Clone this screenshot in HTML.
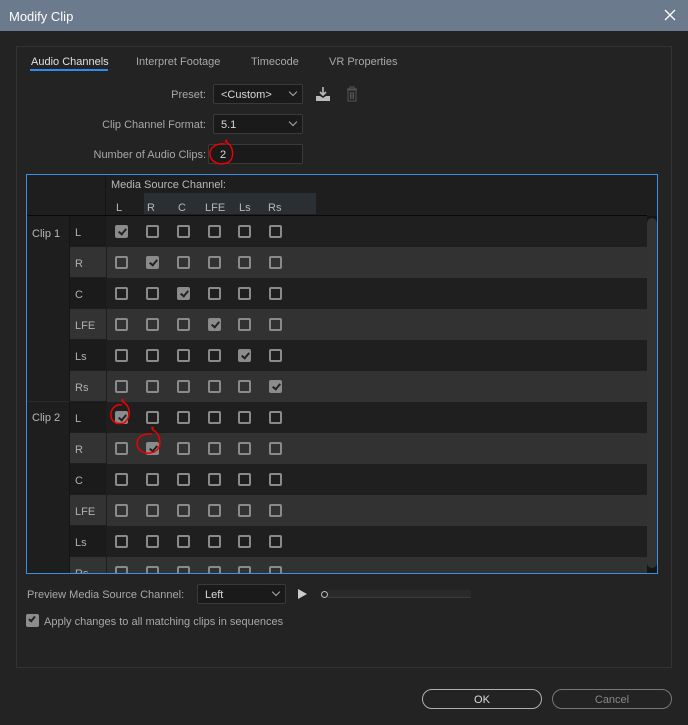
<!DOCTYPE html>
<html><head><style>
*{margin:0;padding:0;box-sizing:border-box}
body{width:688px;height:725px;background:#232323;font-family:"Liberation Sans",sans-serif;font-size:11px;color:#b8b8b8;position:relative;overflow:hidden}
.a{position:absolute}
.title{left:0;top:0;width:688px;height:31px;background:#6b7a8c;color:#fff;font-size:13px;padding:9px 0 0 9px}
.panel{left:16px;top:46px;width:656px;height:622px;border:1px solid #333}
.tab{top:56px;font-size:11px;color:#a8a8a8}
.lbl{text-align:right;color:#a8a8a8;width:200px}
.dd{background:#1a1a1a;border:1px solid #3a3a3a;border-radius:2px;color:#d8d8d8;padding:4px 0 0 7px;height:20px}
.dd i{position:absolute;right:6px;top:4px;width:6px;height:6px;border-right:1px solid #aaa;border-bottom:1px solid #aaa;transform:rotate(45deg)}
.tbl{left:26px;top:174px;width:632px;height:400px;border:1px solid #3b8fe8;background:#1e1e1e;overflow:hidden}
.row{position:absolute;left:80px;width:540px;height:31px}
.d{background:#1f1f1f}.l{background:#323232}
.rl{position:absolute;left:43px;width:36px;height:30px;padding:11px 0 0 5px;color:#b0b0b0}
.rl.d{background:#1b1b1b}.rl.l{background:#333}
.cb{position:absolute;top:9px;width:13px;height:13px;border:2px solid #8a8a8a;border-radius:2px}
.cb.c{background:#8c8c8c}
.cb.c:after{content:"";position:absolute;left:3px;top:0px;width:3px;height:6px;border-right:2px solid #222;border-bottom:2px solid #222;transform:rotate(40deg)}
.btn{top:689px;width:120px;height:20px;border:1px solid #b0b0b0;border-radius:10px;text-align:center;padding-top:4px;font-size:11px}
</style></head><body>
<div class="a title">Modify Clip</div>
<svg class="a" style="left:664px;top:9px" width="12" height="12"><path d="M1 1L11 11M11 1L1 11" stroke="#fff" stroke-width="1.3"/></svg>
<div class="a panel"></div>
<div class="a tab" style="left:31px;color:#e0e0e0">Audio Channels</div>
<div class="a" style="left:30px;top:69px;width:78px;height:2px;background:#2d8ceb"></div>
<div class="a tab" style="left:136px">Interpret Footage</div>
<div class="a tab" style="left:251px">Timecode</div>
<div class="a tab" style="left:329px">VR Properties</div>
<div class="a lbl" style="left:6px;top:89px">Preset:</div>
<div class="a dd" style="left:213px;top:84px;width:90px">&lt;Custom&gt;<i></i></div>
<svg class="a" style="left:315px;top:86px" width="16" height="16"><path d="M8 1V9M5 6L8 9L11 6" stroke="#bbb" stroke-width="1.6" fill="none"/><path d="M1 10H5L8 12L11 10H15V15H1Z" fill="#bbb"/></svg>
<svg class="a" style="left:346px;top:86px" width="12" height="16"><path d="M1 3H11M4 3V1H8V3M2 4H10V15H2ZM4.5 6V13M6 6V13M7.5 6V13" stroke="#555" fill="none"/></svg>
<div class="a lbl" style="left:6px;top:119px">Clip Channel Format:</div>
<div class="a dd" style="left:213px;top:114px;width:90px">5.1<i></i></div>
<div class="a lbl" style="left:6px;top:149px">Number of Audio Clips:</div>
<div class="a dd" style="left:208px;top:144px;width:95px;padding-left:11px">2</div>
<svg class="a" style="left:203px;top:137px" width="36" height="30"><path d="M22 5C26 3 21 2 24 6C30 8 32 20 26 25C18 29 8 26 7 18C6 10 14 6 22 7" stroke="#e00" stroke-width="1.5" fill="none"/></svg>
<div class="a tbl">
<div class="a" style="left:84px;top:4px;color:#b8b8b8">Media Source Channel:</div>
<div class="a" style="left:117px;top:18px;width:172px;height:21px;background:#2a2f33"></div>
<div class="a" style="left:78px;top:0;width:1px;height:40px;background:#151515"></div>
<div class="a" style="left:89px;top:27px">L</div><div class="a" style="left:120px;top:27px">R</div><div class="a" style="left:151px;top:27px">C</div><div class="a" style="left:178px;top:27px">LFE</div><div class="a" style="left:212px;top:27px">Ls</div><div class="a" style="left:241px;top:27px">Rs</div>
<div class="a" style="left:0;top:40px;width:620px;height:1px;background:#080808"></div>
<div class="a" style="left:0;top:41px;width:43px;height:186px;border-right:1px solid #151515;border-bottom:1px solid #2a2a2a"></div>
<div class="a" style="left:5px;top:53px">Clip 1</div>
<div class="a" style="left:0;top:227px;width:43px;height:180px;border-right:1px solid #151515"></div>
<div class="a" style="left:5px;top:237px">Clip 2</div>

<div class="rl d" style="top:41px">L</div><div class="row d" style="top:41px"><div class="cb c" style="left:8px"></div><div class="cb" style="left:39px"></div><div class="cb" style="left:70px"></div><div class="cb" style="left:101px"></div><div class="cb" style="left:131px"></div><div class="cb" style="left:162px"></div></div>
<div class="rl l" style="top:72px">R</div><div class="row l" style="top:72px"><div class="cb" style="left:8px"></div><div class="cb c" style="left:39px"></div><div class="cb" style="left:70px"></div><div class="cb" style="left:101px"></div><div class="cb" style="left:131px"></div><div class="cb" style="left:162px"></div></div>
<div class="rl d" style="top:103px">C</div><div class="row d" style="top:103px"><div class="cb" style="left:8px"></div><div class="cb" style="left:39px"></div><div class="cb c" style="left:70px"></div><div class="cb" style="left:101px"></div><div class="cb" style="left:131px"></div><div class="cb" style="left:162px"></div></div>
<div class="rl l" style="top:134px">LFE</div><div class="row l" style="top:134px"><div class="cb" style="left:8px"></div><div class="cb" style="left:39px"></div><div class="cb" style="left:70px"></div><div class="cb c" style="left:101px"></div><div class="cb" style="left:131px"></div><div class="cb" style="left:162px"></div></div>
<div class="rl d" style="top:165px">Ls</div><div class="row d" style="top:165px"><div class="cb" style="left:8px"></div><div class="cb" style="left:39px"></div><div class="cb" style="left:70px"></div><div class="cb" style="left:101px"></div><div class="cb c" style="left:131px"></div><div class="cb" style="left:162px"></div></div>
<div class="rl l" style="top:196px">Rs</div><div class="row l" style="top:196px"><div class="cb" style="left:8px"></div><div class="cb" style="left:39px"></div><div class="cb" style="left:70px"></div><div class="cb" style="left:101px"></div><div class="cb" style="left:131px"></div><div class="cb c" style="left:162px"></div></div>
<div class="rl d" style="top:227px">L</div><div class="row d" style="top:227px"><div class="cb c" style="left:8px"></div><div class="cb" style="left:39px"></div><div class="cb" style="left:70px"></div><div class="cb" style="left:101px"></div><div class="cb" style="left:131px"></div><div class="cb" style="left:162px"></div></div>
<div class="rl l" style="top:258px">R</div><div class="row l" style="top:258px"><div class="cb" style="left:8px"></div><div class="cb c" style="left:39px"></div><div class="cb" style="left:70px"></div><div class="cb" style="left:101px"></div><div class="cb" style="left:131px"></div><div class="cb" style="left:162px"></div></div>
<div class="rl d" style="top:289px">C</div><div class="row d" style="top:289px"><div class="cb" style="left:8px"></div><div class="cb" style="left:39px"></div><div class="cb" style="left:70px"></div><div class="cb" style="left:101px"></div><div class="cb" style="left:131px"></div><div class="cb" style="left:162px"></div></div>
<div class="rl l" style="top:320px">LFE</div><div class="row l" style="top:320px"><div class="cb" style="left:8px"></div><div class="cb" style="left:39px"></div><div class="cb" style="left:70px"></div><div class="cb" style="left:101px"></div><div class="cb" style="left:131px"></div><div class="cb" style="left:162px"></div></div>
<div class="rl d" style="top:351px">Ls</div><div class="row d" style="top:351px"><div class="cb" style="left:8px"></div><div class="cb" style="left:39px"></div><div class="cb" style="left:70px"></div><div class="cb" style="left:101px"></div><div class="cb" style="left:131px"></div><div class="cb" style="left:162px"></div></div>
<div class="rl l" style="top:382px">Rs</div><div class="row l" style="top:382px"><div class="cb" style="left:8px"></div><div class="cb" style="left:39px"></div><div class="cb" style="left:70px"></div><div class="cb" style="left:101px"></div><div class="cb" style="left:131px"></div><div class="cb" style="left:162px"></div></div>
<div class="a" style="left:620px;top:41px;width:10px;height:358px;background:#151515"></div>
<div class="a" style="left:620px;top:43px;width:10px;height:350px;background:#333;border-radius:5px"></div>
</div>
<svg class="a" style="left:108px;top:397px" width="64" height="66"><path d="M14 5C17 2 12 1 15 5C22 8 24 20 16 26C8 28 2 24 3 16C4 10 9 7 14 8" stroke="#e00" stroke-width="1.5" fill="none"/><path d="M44 33C47 30 42 29 45 33C53 37 55 51 46 55C38 58 30 55 29 47C29 40 35 36 44 37" stroke="#e00" stroke-width="1.5" fill="none"/></svg>
<div class="a" style="left:27px;top:589px;color:#a8a8a8">Preview Media Source Channel:</div>
<div class="a dd" style="left:197px;top:584px;width:89px;padding-left:7px">Left<i></i></div>
<svg class="a" style="left:297px;top:588px" width="12" height="12"><path d="M1 1L10 6L1 11Z" fill="#ccc"/></svg>
<div class="a" style="left:321px;top:591px;width:7px;height:7px;border:1px solid #bbb;border-radius:50%"></div>
<div class="a" style="left:328px;top:590px;width:143px;height:8px;background:#2a2a2a;border-bottom:1px solid #3a3a3a"></div>
<div class="a" style="left:26px;top:614px;width:13px;height:13px;background:#8c8c8c;border-radius:2px"></div>
<div class="a" style="left:30px;top:615px;width:4px;height:7px;border-right:2px solid #222;border-bottom:2px solid #222;transform:rotate(40deg)"></div>
<div class="a" style="left:44px;top:616px;color:#a8a8a8">Apply changes to all matching clips in sequences</div>
<div class="a btn" style="left:422px;color:#ddd">OK</div>
<div class="a btn" style="left:552px;color:#888;border-color:#777">Cancel</div>
</body></html>
